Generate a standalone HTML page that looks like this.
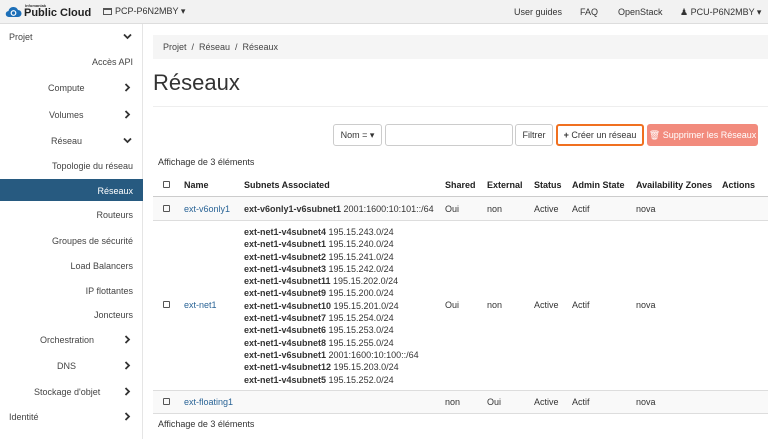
<!DOCTYPE html>
<html><head><meta charset="utf-8"><style>
*{box-sizing:border-box;margin:0;padding:0}
body{width:768px;height:439px;overflow:hidden;font-family:"Liberation Sans",sans-serif;font-size:9px;color:#333;background:#fff;position:relative}
.hdr{position:absolute;left:0;top:0;width:768px;height:24px;background:#f2f2f2;border-bottom:1px solid #ddd}
.a{position:absolute;white-space:nowrap}
.side{position:absolute;left:0;top:24px;width:143px;height:415px;background:#fff;border-right:1px solid #e5e5e5}
.si{position:absolute;white-space:nowrap;font-size:9px;color:#444}
.chev{position:absolute;width:9px;height:9px}
.bold{font-weight:bold;color:#222}
.cb{position:absolute;width:7px;height:7px;border:1px solid #555;border-radius:1px}
.line{position:absolute;height:1px;background:#ddd;left:153px;width:615px}
.btn{position:absolute;border:1px solid #ccc;border-radius:3px;background:#fff;height:22px;top:124px;font-size:9px;color:#333;text-align:center;line-height:20px}
</style></head><body>
<div class="hdr"></div>
<svg class="a" style="left:5px;top:5px" width="17" height="13" viewBox="0 0 17 13"><path d="M4 12h9a3.5 3.5 0 0 0 0-7 5 5 0 0 0-9.5 1A3 3 0 0 0 4 12z" fill="#1d6fb8"/><circle cx="8.5" cy="8" r="2.3" fill="none" stroke="#fff" stroke-width="1.2"/></svg>
<div class="a" style="left:25px;top:3px;font-size:4px;font-weight:bold;color:#333">Infomaniak</div>
<div class="a" style="left:24px;top:7px;font-size:11px;font-weight:bold;color:#222">Public Cloud</div>
<div class="a" style="left:103px;top:8px;width:9px;height:7px;border:1px solid #555;border-top-width:2px"></div>
<div class="a" style="left:115px;top:6px;font-size:9px;color:#333">PCP-P6N2MBY ▾</div>
<div class="a" style="left:514px;top:7px;color:#333">User guides</div>
<div class="a" style="left:580px;top:7px;color:#333">FAQ</div>
<div class="a" style="left:618px;top:7px;color:#333">OpenStack</div>
<div class="a" style="left:680px;top:7px;color:#333">&#9823; PCU-P6N2MBY ▾</div>

<div class="side"></div>
<div class="si" style="left:9px;top:32px">Projet</div><svg class="chev" style="left:123px;top:32px" viewBox="0 0 9 9"><path d="M1 2.5l3.5 3.5 3.5-3.5" fill="none" stroke="#333" stroke-width="1.8"/></svg>
<div class="si" style="right:635px;top:57px">Accès API</div>
<div class="si" style="left:48px;top:83px">Compute</div><svg class="chev" style="left:123px;top:83px" viewBox="0 0 9 9"><path d="M2.5 1l3.5 3.5-3.5 3.5" fill="none" stroke="#333" stroke-width="1.8"/></svg>
<div class="si" style="left:49px;top:110px">Volumes</div><svg class="chev" style="left:123px;top:110px" viewBox="0 0 9 9"><path d="M2.5 1l3.5 3.5-3.5 3.5" fill="none" stroke="#333" stroke-width="1.8"/></svg>
<div class="si" style="left:51px;top:136px">Réseau</div><svg class="chev" style="left:123px;top:136px" viewBox="0 0 9 9"><path d="M1 2.5l3.5 3.5 3.5-3.5" fill="none" stroke="#333" stroke-width="1.8"/></svg>
<div class="si" style="right:635px;top:161px">Topologie du réseau</div>
<div class="a" style="left:0;top:179px;width:143px;height:22px;background:#275a80"></div>
<div class="si" style="right:635px;top:186px;color:#fff">Réseaux</div>
<div class="si" style="right:635px;top:210px">Routeurs</div>
<div class="si" style="right:635px;top:236px">Groupes de sécurité</div>
<div class="si" style="right:635px;top:261px">Load Balancers</div>
<div class="si" style="right:635px;top:286px">IP flottantes</div>
<div class="si" style="right:635px;top:310px">Joncteurs</div>
<div class="si" style="left:40px;top:335px">Orchestration</div><svg class="chev" style="left:123px;top:335px" viewBox="0 0 9 9"><path d="M2.5 1l3.5 3.5-3.5 3.5" fill="none" stroke="#333" stroke-width="1.8"/></svg>
<div class="si" style="left:57px;top:361px">DNS</div><svg class="chev" style="left:123px;top:361px" viewBox="0 0 9 9"><path d="M2.5 1l3.5 3.5-3.5 3.5" fill="none" stroke="#333" stroke-width="1.8"/></svg>
<div class="si" style="left:34px;top:387px">Stockage d'objet</div><svg class="chev" style="left:123px;top:387px" viewBox="0 0 9 9"><path d="M2.5 1l3.5 3.5-3.5 3.5" fill="none" stroke="#333" stroke-width="1.8"/></svg>
<div class="si" style="left:9px;top:412px">Identité</div><svg class="chev" style="left:123px;top:412px" viewBox="0 0 9 9"><path d="M2.5 1l3.5 3.5-3.5 3.5" fill="none" stroke="#333" stroke-width="1.8"/></svg>

<div class="a" style="left:153px;top:35px;width:615px;height:24px;background:#f5f5f5"></div>
<div class="a" style="left:163px;top:42px;color:#444">Projet &nbsp;/&nbsp; Réseau &nbsp;/&nbsp; Réseaux</div>
<div class="a" style="left:153px;top:70px;font-size:22px;color:#333">Réseaux</div>
<div class="line" style="top:106px;background:#eee"></div>

<div class="btn" style="left:333px;width:49px">Nom = ▾</div>
<div class="btn" style="left:385px;width:128px"></div>
<div class="btn" style="left:515px;width:38px">Filtrer</div>
<div class="btn" style="left:556px;width:88px;border:2px solid #f07020;line-height:18px"><b>+</b> Créer un réseau</div>
<div class="btn" style="left:647px;width:111px;background:#f28b7d;border-color:#f28b7d;color:#fff">&#128465; Supprimer les Réseaux</div>

<div class="a" style="left:158px;top:157px">Affichage de 3 éléments</div>
<div class="cb" style="left:163px;top:181px"></div>
<div class="a bold" style="left:184px;top:180px">Name</div>
<div class="a bold" style="left:244px;top:180px">Subnets Associated</div>
<div class="a bold" style="left:445px;top:180px">Shared</div>
<div class="a bold" style="left:487px;top:180px">External</div>
<div class="a bold" style="left:534px;top:180px">Status</div>
<div class="a bold" style="left:572px;top:180px">Admin State</div>
<div class="a bold" style="left:636px;top:180px">Availability Zones</div>
<div class="a bold" style="left:722px;top:180px">Actions</div>
<div class="line" style="top:196px;background:#ccc"></div>
<div class="a" style="left:153px;top:197px;width:615px;height:23px;background:#f9f9f9"></div>
<div class="cb" style="left:163px;top:205px"></div>
<div class="a" style="left:184px;top:204px;color:#2a6496">ext-v6only1</div>
<div class="a" style="left:244px;top:204px"><b>ext-v6only1-v6subnet1</b> 2001:1600:10:101::/64</div>
<div class="a" style="left:445px;top:204px">Oui</div><div class="a" style="left:487px;top:204px">non</div><div class="a" style="left:534px;top:204px">Active</div><div class="a" style="left:572px;top:204px">Actif</div><div class="a" style="left:636px;top:204px">nova</div>
<div class="line" style="top:220px"></div>
<div class="a" style="left:244px;top:226px;line-height:12.3px">
<b>ext-net1-v4subnet4</b> 195.15.243.0/24<br><b>ext-net1-v4subnet1</b> 195.15.240.0/24<br><b>ext-net1-v4subnet2</b> 195.15.241.0/24<br><b>ext-net1-v4subnet3</b> 195.15.242.0/24<br><b>ext-net1-v4subnet11</b> 195.15.202.0/24<br><b>ext-net1-v4subnet9</b> 195.15.200.0/24<br><b>ext-net1-v4subnet10</b> 195.15.201.0/24<br><b>ext-net1-v4subnet7</b> 195.15.254.0/24<br><b>ext-net1-v4subnet6</b> 195.15.253.0/24<br><b>ext-net1-v4subnet8</b> 195.15.255.0/24<br><b>ext-net1-v6subnet1</b> 2001:1600:10:100::/64<br><b>ext-net1-v4subnet12</b> 195.15.203.0/24<br><b>ext-net1-v4subnet5</b> 195.15.252.0/24</div>
<div class="cb" style="left:163px;top:301px"></div>
<div class="a" style="left:184px;top:300px;color:#2a6496">ext-net1</div>
<div class="a" style="left:445px;top:300px">Oui</div><div class="a" style="left:487px;top:300px">non</div><div class="a" style="left:534px;top:300px">Active</div><div class="a" style="left:572px;top:300px">Actif</div><div class="a" style="left:636px;top:300px">nova</div>
<div class="line" style="top:390px"></div>
<div class="a" style="left:153px;top:391px;width:615px;height:22px;background:#f9f9f9"></div>
<div class="cb" style="left:163px;top:398px"></div>
<div class="a" style="left:184px;top:397px;color:#2a6496">ext-floating1</div>
<div class="a" style="left:445px;top:397px">non</div><div class="a" style="left:487px;top:397px">Oui</div><div class="a" style="left:534px;top:397px">Active</div><div class="a" style="left:572px;top:397px">Actif</div><div class="a" style="left:636px;top:397px">nova</div>
<div class="line" style="top:413px"></div>
<div class="a" style="left:158px;top:419px">Affichage de 3 éléments</div>
</body></html>
